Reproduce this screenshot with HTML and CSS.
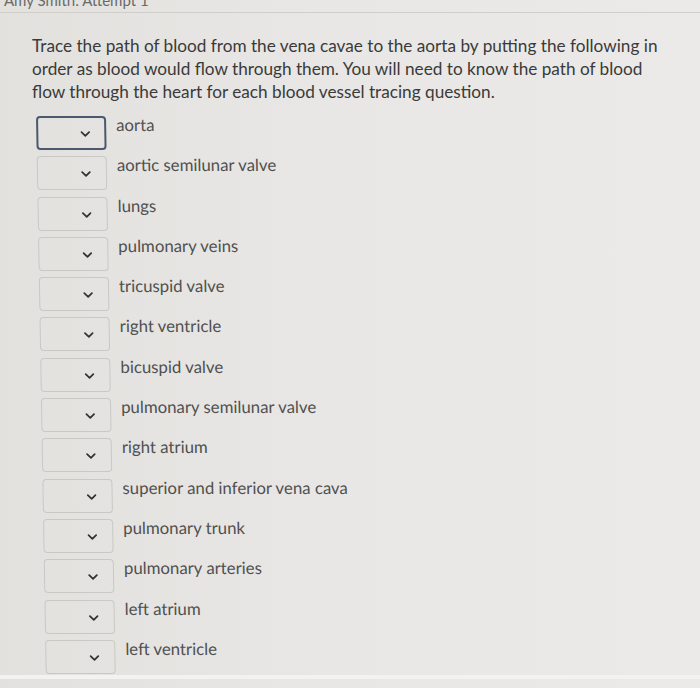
FILE: index.html
```html
<!DOCTYPE html>
<html lang="en">
<head>
  <meta charset="UTF-8" />
  <meta name="viewport" content="width=device-width, initial-scale=1.0"/>
  <title>Quiz: Attempt 1</title>
  <link rel="stylesheet" href="styles.css">
</head>
<body>
  <div class="page">
    <div class="attempt-bar">Amy Smith: Attempt 1</div>

    <div class="question">
      <p class="prompt">Trace the path of blood from the vena cavae to the aorta by putting the following in order as blood would flow through them. You will need to know the path of blood flow through the heart for each blood vessel tracing question.</p>

      <ul class="ordering">
        <li class="order-row">
          <button class="order-select focused" type="button"><svg viewBox="0 0 10 6"><path d="M1.2 1.2 5 4.8 8.8 1.2"/></svg></button>
          <span class="order-label">aorta</span>
        </li>
        <li class="order-row">
          <button class="order-select" type="button"><svg viewBox="0 0 10 6"><path d="M1.2 1.2 5 4.8 8.8 1.2"/></svg></button>
          <span class="order-label">aortic semilunar valve</span>
        </li>
        <li class="order-row">
          <button class="order-select" type="button"><svg viewBox="0 0 10 6"><path d="M1.2 1.2 5 4.8 8.8 1.2"/></svg></button>
          <span class="order-label">lungs</span>
        </li>
        <li class="order-row">
          <button class="order-select" type="button"><svg viewBox="0 0 10 6"><path d="M1.2 1.2 5 4.8 8.8 1.2"/></svg></button>
          <span class="order-label">pulmonary veins</span>
        </li>
        <li class="order-row">
          <button class="order-select" type="button"><svg viewBox="0 0 10 6"><path d="M1.2 1.2 5 4.8 8.8 1.2"/></svg></button>
          <span class="order-label">tricuspid valve</span>
        </li>
        <li class="order-row">
          <button class="order-select" type="button"><svg viewBox="0 0 10 6"><path d="M1.2 1.2 5 4.8 8.8 1.2"/></svg></button>
          <span class="order-label">right ventricle</span>
        </li>
        <li class="order-row">
          <button class="order-select" type="button"><svg viewBox="0 0 10 6"><path d="M1.2 1.2 5 4.8 8.8 1.2"/></svg></button>
          <span class="order-label">bicuspid valve</span>
        </li>
        <li class="order-row">
          <button class="order-select" type="button"><svg viewBox="0 0 10 6"><path d="M1.2 1.2 5 4.8 8.8 1.2"/></svg></button>
          <span class="order-label">pulmonary semilunar valve</span>
        </li>
        <li class="order-row">
          <button class="order-select" type="button"><svg viewBox="0 0 10 6"><path d="M1.2 1.2 5 4.8 8.8 1.2"/></svg></button>
          <span class="order-label">right atrium</span>
        </li>
        <li class="order-row">
          <button class="order-select" type="button"><svg viewBox="0 0 10 6"><path d="M1.2 1.2 5 4.8 8.8 1.2"/></svg></button>
          <span class="order-label">superior and inferior vena cava</span>
        </li>
        <li class="order-row">
          <button class="order-select" type="button"><svg viewBox="0 0 10 6"><path d="M1.2 1.2 5 4.8 8.8 1.2"/></svg></button>
          <span class="order-label">pulmonary trunk</span>
        </li>
        <li class="order-row">
          <button class="order-select" type="button"><svg viewBox="0 0 10 6"><path d="M1.2 1.2 5 4.8 8.8 1.2"/></svg></button>
          <span class="order-label">pulmonary arteries</span>
        </li>
        <li class="order-row">
          <button class="order-select" type="button"><svg viewBox="0 0 10 6"><path d="M1.2 1.2 5 4.8 8.8 1.2"/></svg></button>
          <span class="order-label">left atrium</span>
        </li>
        <li class="order-row">
          <button class="order-select" type="button"><svg viewBox="0 0 10 6"><path d="M1.2 1.2 5 4.8 8.8 1.2"/></svg></button>
          <span class="order-label">left ventricle</span>
        </li>
      </ul>
    </div>
  </div>
</body>
</html>
```

FILE: styles.css
```css
:root {
  --bg: #e6e5e2;
  --text: #3a3a3a;
  --label: #505050;
  --box-border: #c9c8c5;
  --focus: #4b5870;
}

* {
  margin: 0;
  padding: 0;
  box-sizing: border-box;
}

html, body {
  height: 100%;
}

body {
  font-family: Lato, 'Open Sans', sans-serif;
  background: linear-gradient(90deg, #e2e1de 0%, #e8e7e5 45%, #ebeae8 100%);
  color: var(--text);
  overflow: hidden;
}

.page {
  height: 100%;
  border-bottom: 4px solid #f2f2f0;
}

.attempt-bar {
  margin-top: -9px;
  padding-left: 4px;
  height: 22px;
  font-size: 15px;
  line-height: 18px;
  color: #6a6a6a;
  border-bottom: 1px solid #cfcecb;
}

.question {
  padding: 21px 40px 0 32px;
}

.prompt {
  font-size: 17.2px;
  line-height: 23px;
  max-width: 640px;
}

.ordering {
  list-style: none;
  margin-top: 13px;
  padding-left: 4px;
  transform: skewX(1deg);
  transform-origin: top left;
}

.order-row {
  display: flex;
  align-items: flex-start;
  gap: 10px;
  height: 40.3px;
}

.order-select {
  width: 70px;
  height: 34px;
  border: 1px solid var(--box-border);
  border-radius: 4px;
  background: transparent;
  display: flex;
  align-items: center;
  justify-content: flex-end;
  padding-right: 15px;
  padding-top: 2px;
}

.order-select.focused {
  border: 2px solid var(--focus);
  padding-right: 14px;
}

.order-select svg {
  width: 10px;
  height: 6px;
  fill: none;
  stroke: #333;
  stroke-width: 1.8;
  stroke-linecap: round;
  stroke-linejoin: round;
}

.order-label {
  font-size: 16.8px;
  line-height: 18px;
  color: var(--label);
}
```
